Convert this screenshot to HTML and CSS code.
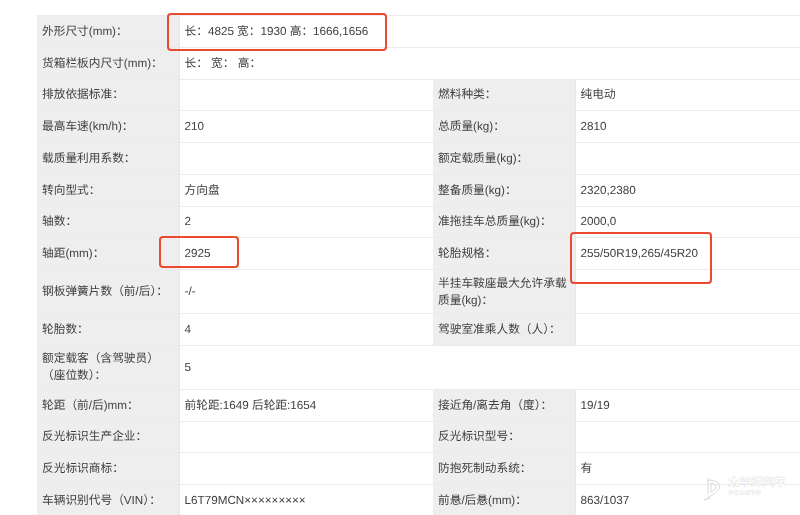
FILE: index.html
```html
<!DOCTYPE html>
<html lang="zh-CN">
<head>
<meta charset="utf-8">
<title>车辆参数</title>
<link rel="stylesheet" href="styles.css">
</head>
<body>
<main class="page">
  <section class="specs">
    <div class="k">外形尺寸(mm)：</div><div class="v span3">长：4825 宽：1930 高：1666,1656</div>
    <div class="k">货箱栏板内尺寸(mm)：</div><div class="v span3">长：&nbsp;宽：&nbsp;高：</div>
    <div class="k">排放依据标准：</div><div class="v"></div><div class="k">燃料种类：</div><div class="v">纯电动</div>
    <div class="k">最高车速(km/h)：</div><div class="v">210</div><div class="k">总质量(kg)：</div><div class="v">2810</div>
    <div class="k">载质量利用系数：</div><div class="v"></div><div class="k">额定载质量(kg)：</div><div class="v"></div>
    <div class="k">转向型式：</div><div class="v">方向盘</div><div class="k">整备质量(kg)：</div><div class="v">2320,2380</div>
    <div class="k">轴数：</div><div class="v">2</div><div class="k">准拖挂车总质量(kg)：</div><div class="v">2000,0</div>
    <div class="k">轴距(mm)：</div><div class="v">2925</div><div class="k">轮胎规格：</div><div class="v">255/50R19,265/45R20</div>
    <div class="k">钢板弹簧片数（前/后）：</div><div class="v">-/-</div><div class="k">半挂车鞍座最大允许承载质量(kg)：</div><div class="v"></div>
    <div class="k">轮胎数：</div><div class="v">4</div><div class="k">驾驶室准乘人数（人）：</div><div class="v"></div>
    <div class="k">额定载客（含驾驶员）（座位数）：</div><div class="v span3">5</div>
    <div class="k">轮距（前/后)mm：</div><div class="v">前轮距:1649 后轮距:1654</div><div class="k">接近角/离去角（度）：</div><div class="v">19/19</div>
    <div class="k">反光标识生产企业：</div><div class="v"></div><div class="k">反光标识型号：</div><div class="v"></div>
    <div class="k">反光标识商标：</div><div class="v"></div><div class="k">防抱死制动系统：</div><div class="v">有</div>
    <div class="k">车辆识别代号（VIN）：</div><div class="v">L6T79MCN×××××××××</div><div class="k">前悬/后悬(mm)：</div><div class="v">863/1037</div>
  </section>
  <div class="mark mark-size"></div>
  <div class="mark mark-base"></div>
  <div class="mark mark-tire"></div>
  <div class="logo">
    <svg class="logo-icon" width="22" height="24" viewBox="0 0 22 24" aria-hidden="true">
      <path d="M6 1 L6 17 M6 3 C15 3 19 7 17 12 C15 15 9 19 2 23 L8 21 M9 6 L9 15 C13 13 15 11 13 8 C12 7 11 6 9 6 Z" fill="none" stroke="#d8d8d8" stroke-width="1"/>
    </svg>
    <div class="logo-text">
      <div class="logo-cn">太平洋汽车</div>
      <div class="logo-en">PCAUTO</div>
    </div>
  </div>
</main>
</body>
</html>
```
FILE: styles.css
```css
html, body {
  margin: 0;
  padding: 0;
  background: #fff;
}
.page {
  position: relative;
  width: 800px;
  height: 515px;
  overflow: hidden;
  font-family: "Liberation Sans", "Noto Sans CJK SC", sans-serif;
  font-size: 11.7px;
  line-height: 17px;
  color: #404040;
  text-rendering: geometricPrecision;
}
.specs {
  display: grid;
  width: 780px;
  margin: 15px 0 0 37px;
  grid-template-columns: 143px 253px 143px 241px;
  grid-template-rows: repeat(8, 31.75px) 44px 31.75px 44px repeat(4, 31.75px);
  filter: blur(0.4px);
}
.k, .v {
  display: flex;
  align-items: center;
  box-sizing: border-box;
  padding: 0 5px;
  border-top: 1px solid #ebebeb;
  min-width: 0;
}
.k {
  background: #eeeeee;
  border-right: 1px solid #e6e6e6;
}
.v { background: #fff; padding-left: 4.5px; }
.span3 { grid-column: span 3; }
.mark {
  position: absolute;
  box-sizing: border-box;
  border: 2px solid #ea4a31;
  border-radius: 4px;
  filter: blur(0.3px);
}
.mark-size { left: 167px; top: 13px; width: 220px; height: 38px; }
.mark-base { left: 159px; top: 236px; width: 80px; height: 32px; }
.mark-tire { left: 570px; top: 232px; width: 142px; height: 52px; }
.logo {
  position: absolute;
  left: 702px;
  top: 477px;
  display: flex;
  gap: 4px;
}
.logo-icon { flex: none; }
.logo-text {
  color: #fff;
  text-shadow: 0 0 1px rgba(0, 0, 0, 0.3);
}
.logo-cn {
  font-size: 11.5px;
  line-height: 13px;
  font-weight: 700;
  white-space: nowrap;
}
.logo-en {
  font-size: 6.5px;
  line-height: 8px;
  letter-spacing: 0.9px;
  font-weight: 700;
  padding-left: 1px;
}
```
